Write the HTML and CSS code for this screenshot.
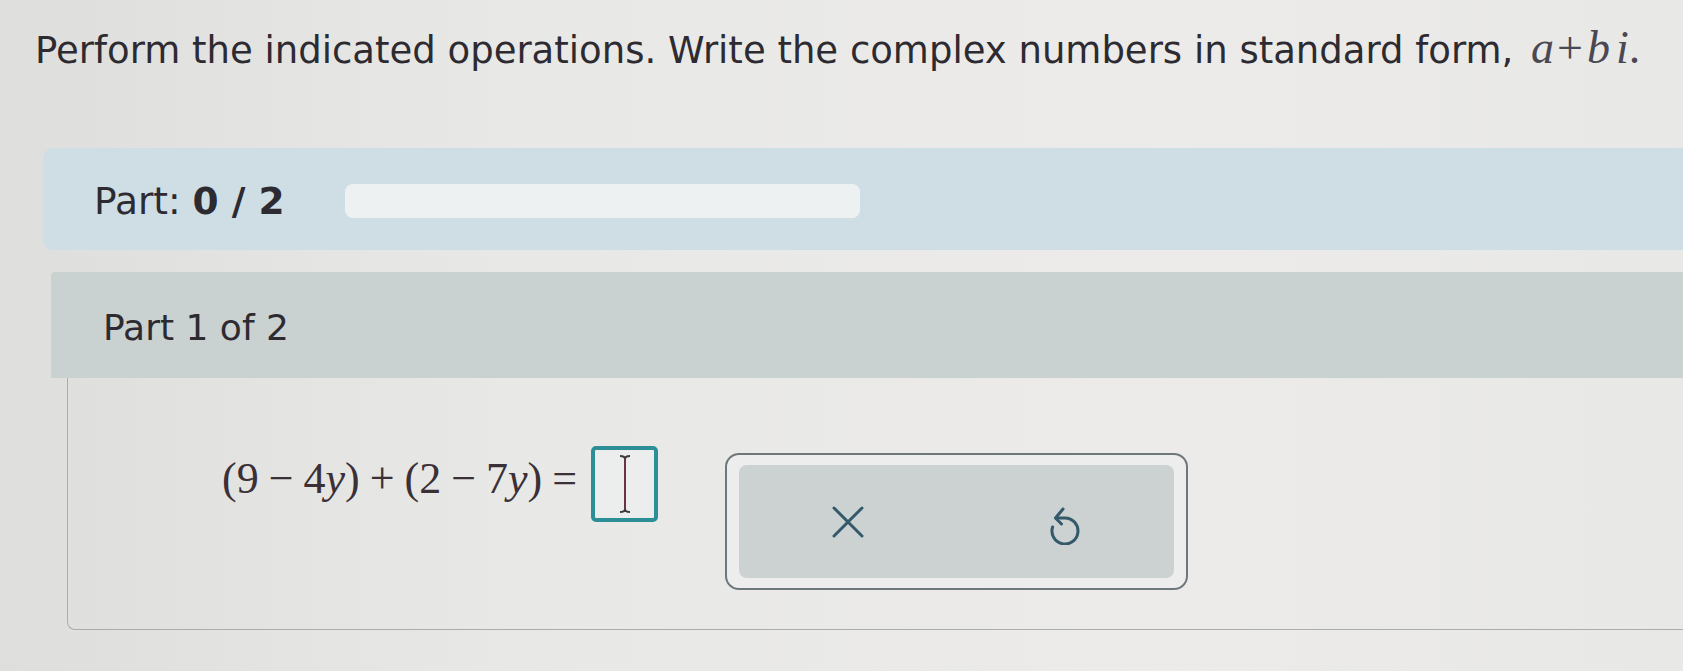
FILE: index.html
```html
<!DOCTYPE html>
<html lang="en">
<head>
<meta charset="utf-8">
<title>Complex numbers</title>
<link rel="stylesheet" href="styles.css">
</head>
<body>
<div class="page">
  <h1 class="title">Perform the indicated operations. Write the complex numbers in standard form, <span class="math-inline"><i>a</i><span class="plus">+</span><i class="b">b</i><i>i</i>.</span></h1>

  <div class="progress-band">
    <span class="progress-label">Part: <b>0 / 2</b></span>
    <div class="progress-bar"></div>
  </div>

  <div class="part-band">
    <span class="part-label">Part 1 of 2</span>
  </div>

  <div class="card">
    <div class="row">
      <div class="equation">
        <span>(9</span><span class="op">−</span><span>4<i>y</i>)</span><span class="op">+</span><span>(2</span><span class="op">−</span><span>7<i>y</i>)</span><span class="op eq">=</span>
      </div>
      <div class="answer-box">
        <svg class="ibeam" width="14" height="60" viewBox="0 0 14 60">
          <path d="M7 5 V55" stroke="#6b3344" stroke-width="2"/>
          <path d="M2 2 Q7 2 7 5 Q7 2 12 2 M2 58 Q7 58 7 55 Q7 58 12 58" fill="none" stroke="#3f3a3c" stroke-width="2"/>
        </svg>
      </div>
      <div class="tool-group">
        <div class="tool-inner">
          <button class="tool" type="button" aria-label="Clear">
            <svg width="32" height="32" viewBox="0 0 32 32">
              <path d="M2 2 L30 30 M30 2 L2 30" stroke="#33596a" stroke-width="3" stroke-linecap="round" fill="none"/>
            </svg>
          </button>
          <button class="tool" type="button" aria-label="Undo">
            <svg class="undo" width="36" height="42" viewBox="0 0 36 42">
              <path d="M5.6 24 A13 13 0 1 0 18 15 L9 15" stroke="#33596a" stroke-width="3" stroke-linecap="round" stroke-linejoin="round" fill="none"/>
              <path d="M16 6 L8.5 15 L14.5 21" stroke="#33596a" stroke-width="3" stroke-linecap="round" stroke-linejoin="round" fill="none"/>
            </svg>
          </button>
        </div>
      </div>
    </div>
  </div>
</div>
</body>
</html>
```

FILE: styles.css
```css
html, body {
  margin: 0;
  padding: 0;
}
body {
  width: 1683px;
  height: 671px;
  overflow: hidden;
  background: linear-gradient(90deg, #dededc 0%, #e8e8e6 30%, #ecebea 70%, #e8e8e6 100%);
  font-family: "DejaVu Sans", Verdana, sans-serif;
  color: #2d2b31;
}
.page {
  padding-top: 26px;
}
.title {
  margin: 0 0 0 35px;
  font-size: 37px;
  line-height: 44px;
  font-weight: normal;
  white-space: nowrap;
}
.math-inline {
  font-family: "Liberation Serif", "Times New Roman", serif;
  font-size: 46px;
  line-height: 44px;
  color: #4a4852;
  margin-left: 6px;
}
.math-inline i {
  font-style: italic;
}
.math-inline .plus {
  margin: 0 4px 0 3px;
}
.math-inline .b {
  margin-right: 6px;
}

.progress-band {
  margin: 75px 0 0 43px;
  height: 102px;
  background: #cfdee5;
  border-radius: 10px 0 0 10px;
  display: flex;
  align-items: center;
  padding-left: 51px;
  padding-top: 4px;
  box-sizing: border-box;
}
.progress-label {
  font-size: 37.5px;
  line-height: 44px;
  white-space: nowrap;
}
.progress-label b {
  font-weight: bold;
}
.progress-bar {
  margin-left: 60px;
  width: 515px;
  height: 34px;
  background: #eef1f1;
  border-radius: 8px;
}

.part-band {
  margin: 22px 0 0 51px;
  height: 106px;
  background: #c9d2d0;
  border-radius: 4px 0 0 0;
  display: flex;
  align-items: center;
  padding-left: 52px;
  padding-top: 6px;
  box-sizing: border-box;
}
.part-label {
  font-size: 36px;
  line-height: 44px;
}

.card {
  margin-left: 67px;
  width: 1700px;
  height: 252px;
  box-sizing: border-box;
  border-left: 1.5px solid #a9adae;
  border-bottom: 1.5px solid #a9adae;
  border-bottom-left-radius: 8px;
  padding: 75px 0 0 0;
}
.row {
  display: flex;
  align-items: flex-start;
}
.equation {
  margin-left: 154px;
  margin-top: 1px;
  font-family: "Liberation Serif", "Times New Roman", serif;
  font-size: 44px;
  line-height: 50px;
  color: #3a3036;
  white-space: nowrap;
  display: flex;
}
.equation i {
  font-style: italic;
}
.equation .op {
  padding: 0 10px;
}
.equation .eq {
  padding-right: 0;
}
.answer-box {
  margin: -7px 0 0 14px;
  width: 67px;
  height: 76px;
  box-sizing: border-box;
  border: 4px solid #2c8f95;
  border-radius: 5px;
  display: flex;
  align-items: center;
  justify-content: center;
  background: #eceeed;
}
.tool-group {
  margin-left: 67px;
  width: 463px;
  height: 137px;
  box-sizing: border-box;
  border: 2px solid #6e777b;
  border-radius: 14px;
  padding: 10px 12px 10px 12px;
  background: #ecedec;
}
.tool-inner {
  height: 100%;
  background: #cbd2d1;
  border-radius: 8px;
  display: flex;
}
.tool {
  flex: 1;
  border: 0;
  background: transparent;
  display: flex;
  align-items: center;
  justify-content: center;
  padding: 0;
}
.undo {
  margin-top: 4px;
}
```
